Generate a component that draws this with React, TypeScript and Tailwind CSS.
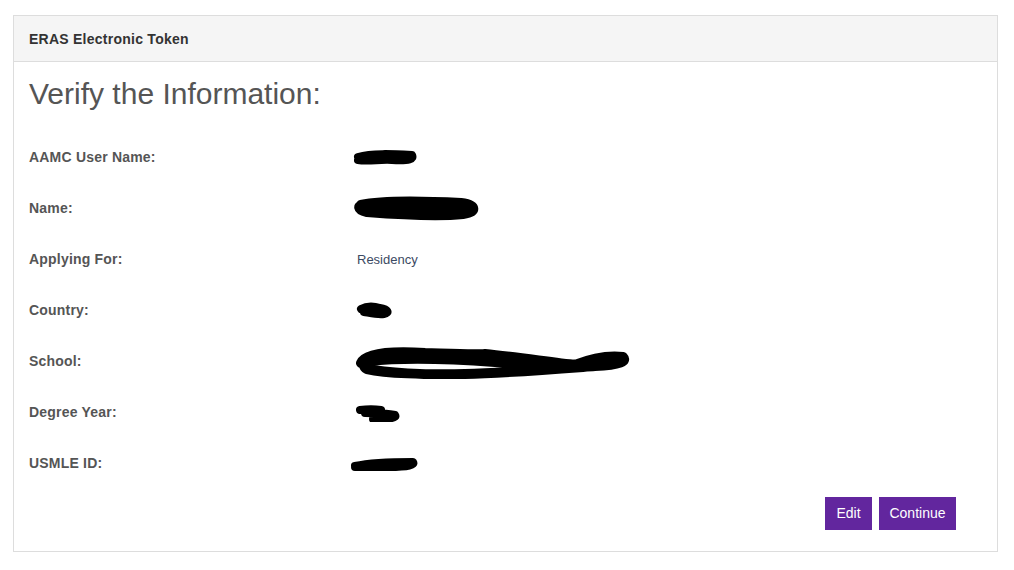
const rows: { label: string; value?: string; scribble?: { w: number; h: number; d: string; dx: number; sw?: number } }[] = [
  { label: "AAMC User Name:", scribble: { w: 66, h: 16, dx: -5, d: "M6 7 C20 3 40 4 60 5 C62 9 58 11 40 10 C28 9 16 12 6 10" } },
  { label: "Name:", scribble: { w: 128, h: 26, dx: -4, sw: 10, d: "M8 9 C30 4 70 5 108 7 C124 9 124 16 110 18 C80 21 40 18 14 16 C4 14 4 9 12 9 C40 11 80 12 112 12" } },
  { label: "Applying For:", value: "Residency" },
  { label: "Country:", scribble: { w: 38, h: 17, dx: -1, d: "M5 7 C12 3 18 4 24 6 C32 7 34 11 28 12 C22 13 14 11 8 10" } },
  { label: "School:", scribble: { w: 276, h: 34, dx: -2, sw: 10, d: "M6 18 C10 8 40 6 70 8 C100 9 120 10 130 9 C160 12 200 18 220 20 C230 16 250 10 268 12 C272 16 266 20 240 21 C200 24 150 28 110 29 C70 30 30 28 12 24 C8 22 8 18 14 16 C50 12 100 14 140 17 C170 20 200 21 230 19" } },
  { label: "Degree Year:", scribble: { w: 46, h: 18, dx: -2, d: "M5 6 C12 5 20 5 26 6 M10 9 C20 9 32 9 40 11 C42 14 36 15 18 15" } },
  { label: "USMLE ID:", scribble: { w: 70, h: 14, dx: -8, d: "M6 9 C20 6 40 5 64 5 C66 8 60 10 40 10 C26 10 14 10 6 10" } },
];

export default function App() {
  return (
    <div className="bg-white min-h-[570px] pt-[15px] pl-[13px]" style={{ fontFamily: '"Liberation Sans", Arial, sans-serif' }}>
      <div className="w-[985px] border border-[#dddddd]">
        <div className="h-[46px] bg-[#f5f5f5] border-b border-[#dddddd] px-[15px] flex items-center">
          <span className="text-[14px] font-bold text-[#333333] pt-px tracking-[0.25px]">ERAS Electronic Token</span>
        </div>
        <div className="px-[15px] pt-[15px] pb-[21px]">
          <h1 className="text-[30px] leading-[33px] text-[#555555] mb-[22px]">Verify the Information:</h1>
          {rows.map((r) => (
            <div key={r.label} className="h-[51px] flex items-center">
              <div className="w-[328px] text-[14px] font-bold text-[#555555] tracking-[0.2px]">{r.label}</div>
              {r.value && <div className="text-[13px] text-[#3b4a63]">{r.value}</div>}
              {r.scribble && (
                <svg
                  width={r.scribble.w}
                  height={r.scribble.h}
                  viewBox={`0 0 ${r.scribble.w} ${r.scribble.h}`}
                  style={{ marginLeft: r.scribble.dx }}
                  fill="none"
                  stroke="#000"
                  strokeWidth={r.scribble.sw ?? 8}
                  strokeLinecap="round"
                  strokeLinejoin="round"
                >
                  <path d={r.scribble.d} />
                </svg>
              )}
            </div>
          ))}
          <div className="flex justify-end gap-[7px] mt-[8px] pr-[26px]">
            <button className="w-[47px] h-[33px] bg-[#62269e] text-white text-[14px]">Edit</button>
            <button className="w-[77px] h-[33px] bg-[#62269e] text-white text-[14px]">Continue</button>
          </div>
        </div>
      </div>
    </div>
  );
}
